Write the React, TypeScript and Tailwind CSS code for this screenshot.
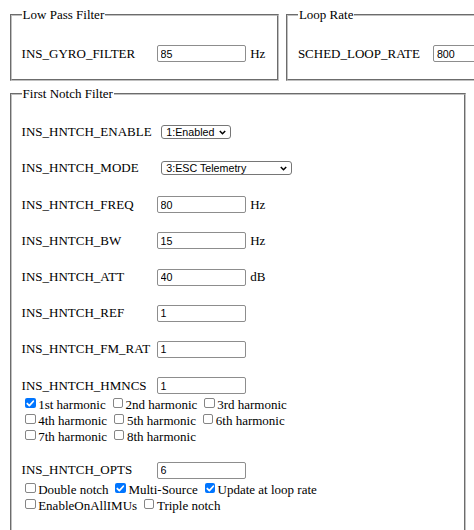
import React from "react";

const SERIF = "font-['Liberation_Serif','Times_New_Roman',serif]";
const FS =
  "m-0 min-w-0 border-2 [border-style:groove] border-[#c0c0c0] px-[9.6px] pt-0";

function Cb({ checked = false }: { checked?: boolean }) {
  return checked ? (
    <span className="inline-block w-[10.4px] h-[10.4px] ml-[3.6px] mr-[2.6px] mb-[1px] align-baseline rounded-[2px] bg-[#0075ff] overflow-hidden">
      <svg viewBox="0 0 10 10" className="w-full h-full">
        <path
          d="M2.2 5.3 L4.2 7.3 L8 3.1"
          stroke="#fff"
          strokeWidth="1.7"
          fill="none"
          strokeLinecap="round"
          strokeLinejoin="round"
        />
      </svg>
    </span>
  ) : (
    <span className="inline-block w-[10.4px] h-[10.4px] ml-[3.6px] mr-[2.6px] mb-[1px] align-baseline rounded-[2px] border border-[#858585] bg-white overflow-hidden" />
  );
}

function TextInput({ value }: { value: string }) {
  return (
    <input
      type="text"
      readOnly
      value={value}
      className="h-[17px] w-[89px] shrink-0 border border-[#8d8d8d] rounded-[2px] px-[2.4px] font-['Liberation_Sans',Arial,sans-serif] text-[10.7px] text-black outline-none bg-white"
    />
  );
}

function Select({ value, width }: { value: string; width: string }) {
  return (
    <div
      className={`ml-[3.8px] h-[14px] ${width} shrink-0 border border-[#767676] rounded-[3px] flex items-center justify-between pl-[4.3px] pr-[4px] font-['Liberation_Sans',Arial,sans-serif] text-[10.7px] text-black bg-white`}
    >
      <span className="leading-none">{value}</span>
      <svg width="7" height="5" viewBox="0 0 7 5">
        <path
          d="M0.8 0.9 L3.5 3.7 L6.2 0.9"
          stroke="#000"
          strokeWidth="1.5"
          fill="none"
        />
      </svg>
    </div>
  );
}

function Row({
  label,
  children,
  className = "",
}: {
  label: string;
  children?: React.ReactNode;
  className?: string;
}) {
  return (
    <div className={`flex items-center h-[20px] whitespace-nowrap ${className}`}>
      <span className="w-[135.6px] shrink-0 leading-[20px]">{label}</span>
      {children}
    </div>
  );
}

function Unit({ children }: { children: React.ReactNode }) {
  return <span className="ml-[4px] leading-[20px]">{children}</span>;
}

function CbLine({ children }: { children: React.ReactNode }) {
  return <div className="h-[16px] leading-[16px] whitespace-nowrap">{children}</div>;
}

export default function App() {
  return (
    <div
      className={`w-[474px] h-[530px] overflow-hidden bg-white text-black text-[13px] ${SERIF} pt-[7px] pl-[10px]`}
    >
      <div className="flex items-start gap-[7px] w-max">
        <fieldset className={`${FS} w-[269.3px] pb-[15.1px]`}>
          <legend className="px-[1px] leading-[16px]">Low Pass Filter</legend>
          <Row label="INS_GYRO_FILTER" className="mt-[20.9px]">
            <TextInput value="85" />
            <Unit>Hz</Unit>
          </Row>
        </fieldset>
        <fieldset className={`${FS} w-[270px] pb-[15.1px]`}>
          <legend className="px-[1px] leading-[16px]">Loop Rate</legend>
          <Row label="SCHED_LOOP_RATE" className="mt-[20.9px]">
            <TextInput value="800" />
          </Row>
        </fieldset>
      </div>

      <fieldset className={`${FS} mt-[5px] w-[456px] pb-[20px]`}>
        <legend className="px-[1px] leading-[16px]">First Notch Filter</legend>
        <Row label="INS_HNTCH_ENABLE" className="mt-[20.3px]">
          <Select value="1:Enabled" width="w-[70.5px]" />
        </Row>
        <Row label="INS_HNTCH_MODE" className="mt-[16.2px]">
          <Select value="3:ESC Telemetry" width="w-[131px]" />
        </Row>
        <Row label="INS_HNTCH_FREQ" className="mt-[16.2px]">
          <TextInput value="80" />
          <Unit>Hz</Unit>
        </Row>
        <Row label="INS_HNTCH_BW" className="mt-[16.2px]">
          <TextInput value="15" />
          <Unit>Hz</Unit>
        </Row>
        <Row label="INS_HNTCH_ATT" className="mt-[16.2px]">
          <TextInput value="40" />
          <Unit>dB</Unit>
        </Row>
        <Row label="INS_HNTCH_REF" className="mt-[16.2px]">
          <TextInput value="1" />
        </Row>
        <Row label="INS_HNTCH_FM_RAT" className="mt-[16.2px]">
          <TextInput value="1" />
        </Row>
        <Row label="INS_HNTCH_HMNCS" className="mt-[16.2px]">
          <TextInput value="1" />
        </Row>
        <div className="mt-[1.9px]">
          <CbLine>
            <Cb checked />1st harmonic <Cb />2nd harmonic <Cb />3rd harmonic
          </CbLine>
          <CbLine>
            <Cb />4th harmonic <Cb />5th harmonic <Cb />6th harmonic
          </CbLine>
          <CbLine>
            <Cb />7th harmonic <Cb />8th harmonic
          </CbLine>
        </div>
        <Row label="INS_HNTCH_OPTS" className="mt-[15px]">
          <TextInput value="6" />
        </Row>
        <div className="mt-[2px]">
          <CbLine>
            <Cb />Double notch <Cb checked />Multi-Source <Cb checked />Update at loop rate
          </CbLine>
          <CbLine>
            <Cb />EnableOnAllIMUs <Cb />Triple notch
          </CbLine>
        </div>
      </fieldset>
    </div>
  );
}
